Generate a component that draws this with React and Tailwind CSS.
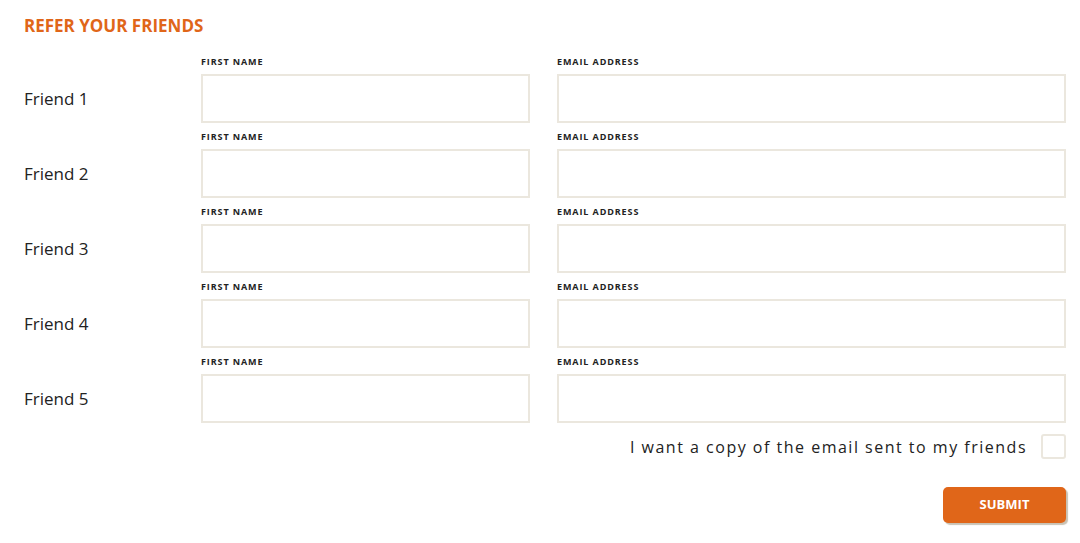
import React from 'react';

const friends = [1, 2, 3, 4, 5];

function Field({ label, className }) {
  return (
    <div className={`flex flex-col ${className}`}>
      <span className="text-[9px] font-bold tracking-[0.9px] text-[#222] leading-[12px] mb-[6px]">{label}</span>
      <input type="text" className="h-[49px] w-full border-2 border-[#ebe7de] bg-white outline-none" />
    </div>
  );
}

export default function App() {
  return (
    <div className="w-[1080px] h-[543px] bg-white pl-[24px] pr-[14px] pt-[16px]" style={{ fontFamily: '"Open Sans", sans-serif' }}>
      <h2 className="text-[17px] font-bold text-[#e06619] leading-[20px] mb-[20px]">REFER YOUR FRIENDS</h2>

      <div className="flex flex-col gap-[8px]">
        {friends.map((n) => (
          <div key={n} className="flex items-end">
            <div className="w-[177px] h-[49px] flex items-center text-[17px] text-[#222]">Friend {n}</div>
            <Field label="FIRST NAME" className="w-[329px]" />
            <Field label="EMAIL ADDRESS" className="w-[509px] ml-[27px]" />
          </div>
        ))}
      </div>

      {/* copy checkbox */}
      <div className="flex items-center justify-end mt-[11px]">
        <span className="text-[16px] tracking-[1.5px] text-[#222]">I want a copy of the email sent to my friends</span>
        <span className="ml-[14px] w-[25px] h-[25px] border-2 border-[#ebe7de] rounded-[3px] bg-white" />
      </div>

      <div className="flex justify-end mt-[28px]">
        <button className="w-[123px] h-[36px] bg-[#e06619] rounded-[5px] text-white text-[13px] font-bold shadow-[2px_2px_1px_#c9c2b4]">
          SUBMIT
        </button>
      </div>
    </div>
  );
}
